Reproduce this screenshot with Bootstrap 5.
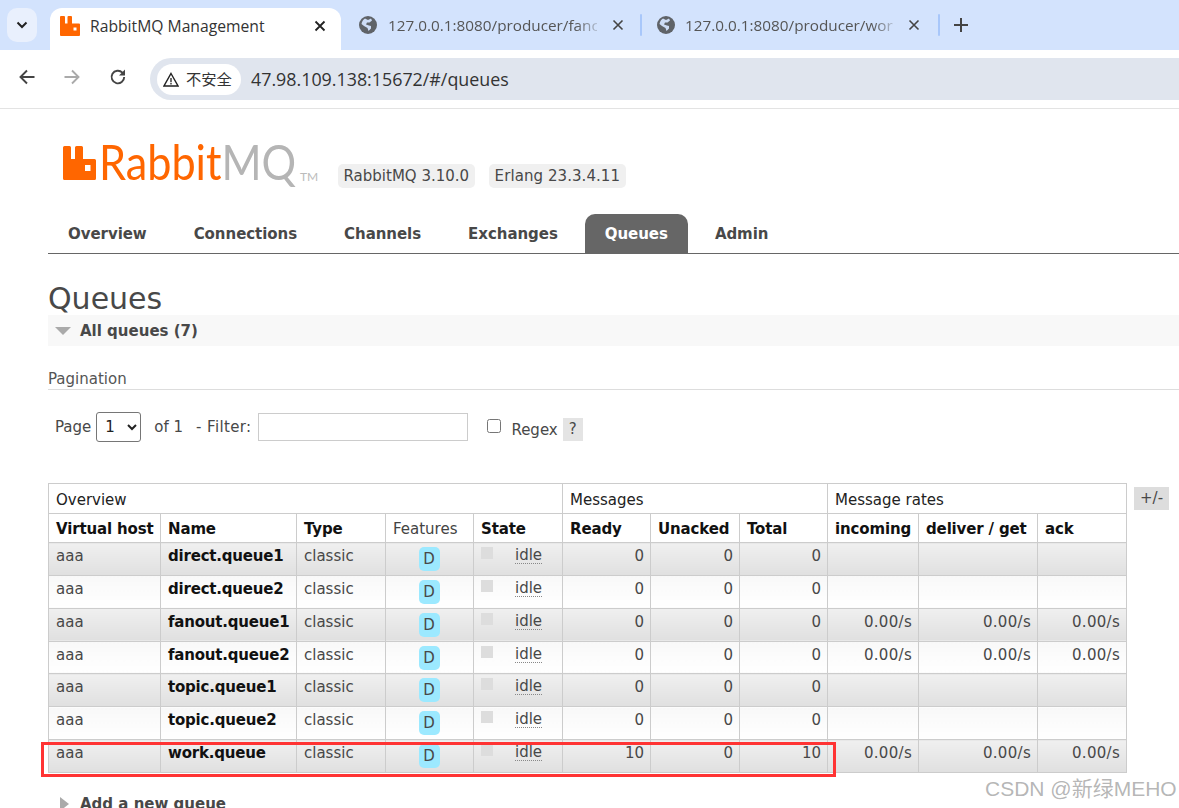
<!DOCTYPE html>
<html lang="en">
<head>
<meta charset="utf-8">
<title>RabbitMQ Management</title>
<link href="https://cdn.jsdelivr.net/npm/bootstrap@5.3.0/dist/css/bootstrap.min.css" rel="stylesheet">
<style>
html,body{height:808px;overflow:hidden;background:#fff}
body{position:relative;font-family:"DejaVu Sans","Noto Sans CJK SC",sans-serif;font-size:15px;color:#484848;line-height:1.2}
.chrome-ui{font-family:"Open Sans","Noto Sans CJK SC",sans-serif}
.strip{height:50px;background:#d3e3fd;padding-left:7px}
.strip>*{flex-shrink:0}
.tab-search{width:30px;height:34px;margin-top:8px;border-radius:10px;background:#e9f0fd}
.tab-on{width:291px;height:42px;margin-top:8px;margin-left:13px;background:#fff;border-radius:12px 12px 0 0;padding:0 0 6px 10px;font-size:15.7px;color:#333}
.tab-on .ttl{width:224px;margin-left:10px;white-space:nowrap}
.tab-off{width:302px;height:34px;margin-top:8px;font-size:15.3px;color:#555;padding-left:18px}
.tab-off>*{flex-shrink:0}
.tab-off .ttl{width:209px;margin-left:11px;white-space:nowrap;-webkit-mask-image:linear-gradient(90deg,#000 90%,rgba(0,0,0,.25))}
.tab-off .xx{margin-left:15px}
.tab-two{width:330px;padding-left:14px}
.tab-two .ttl{width:208px;margin-left:10px}
.sep{width:2px;height:22px;background:#a8c7fa;border-radius:1px;margin-left:16px}
.tab-two .sep{margin-left:18px}
.plus-ic{margin-left:14px}
.tools{height:59px;border-bottom:1px solid #e3e3e3;background:#fff;padding-top:8px}
.tool-btn{width:45px;text-align:center}
.tool-btn.rl{width:46px;padding-left:1px}
.omni{height:42px;flex:1;margin-left:10px;background:#e0e5ee;border-radius:21px 0 0 21px;padding-left:7px;font-size:17.85px;color:#333}
.chip{width:84px;height:31px;background:#fff;border-radius:16px;font-size:15.3px;color:#333;padding-left:6px;gap:7px}
.url{margin-left:10px;padding-top:1px}
.brand{height:105px;padding:37px 0 0 63px}
.logo-word{font-family:Lato,"Open Sans",sans-serif;font-weight:400;font-size:48px;line-height:32px;color:#f60;margin-left:3px;transform:scaleX(.9);transform-origin:0 50%;width:200px;height:34px}
.logo-word i{font-style:normal;color:#b5b5b5}
.tm{font-size:12px;color:#bbb;margin-left:1px;margin-top:24px;width:38px;font-family:Lato,sans-serif}
.ver{background:#f0f0f0;border-radius:5px;padding:3px 5.5px;margin-top:18px;height:24px;font-size:15px;color:#484848;line-height:18px;margin-right:14px}
.ver+.ver{padding:3px 6px;letter-spacing:.07px}
.mainnav{margin-left:48px;height:40px;border-bottom:1px solid #666;gap:7px}
.mainnav .nav-link{font-weight:700;color:#484848;font-size:15px;padding:11px 20px 0;height:40px;line-height:18px;letter-spacing:-.05px}
.mainnav .nav-link.on{background:#666;color:#fff;border-radius:10px 10px 0 0}
.page-main{margin-left:48px}
.ttl-q{font-size:30px;font-weight:400;color:#484848;line-height:36px;margin:27px 0 0}
.sect{height:31px;background:#f8f8f8;margin-top:-2px;padding-left:7px;font-weight:700;gap:9px;font-size:15px}
.tri-d{width:0;height:0;border-left:8px solid transparent;border-right:8px solid transparent;border-top:8px solid #aaa}
.pg-head{font-size:15px;line-height:17px;border-bottom:1px solid #ddd;margin-top:25px;color:#555;height:19px}
.pg-form{height:30px;margin-top:22px;padding-left:7px;font-size:15px}
.pg-select{width:45px;height:30px;font-size:15px;border:1px solid #767676;border-radius:3px;background:#fff;color:#222;margin-left:5px;padding-left:4px;flex-shrink:0}
.pg-filter{letter-spacing:.35px;margin-left:13px}
.pg-of{margin-left:13px}
.pg-input{width:210px;height:28px;border:1px solid #ccc;margin-left:7px}
.pg-check{width:14px;height:14px;margin:-2px 0 0 19px;border:1px solid #767676;border-radius:2.5px;background:#fff}
.pg-regex{margin:5px 0 0 10px}
.hlp{background:#e4e4e4;padding:3px 6px;font-size:15px;margin:5px 0 0 5px;line-height:17px}
.tbl-wrap{margin-top:41px}
table.qtab{width:1078px;table-layout:fixed;border-collapse:collapse;margin:0;font-size:15px;color:#484848}
table.qtab th,table.qtab td{border:1px solid #ccc;padding:3px 6px 3px 7px;vertical-align:top;background:none;color:inherit;box-shadow:none;line-height:18px;font-size:15px;white-space:nowrap}
table.qtab thead th{font-weight:400;color:#222;height:29.5px;padding-top:6px;font-size:15px}
table.qtab thead tr:first-child th{padding-top:7px}
table.qtab thead tr+tr th{font-weight:700;color:#111;font-size:15px;letter-spacing:-.15px}
table.qtab thead tr+tr th.thin{font-weight:400;color:#444;font-size:15px;letter-spacing:0}
table.qtab tbody td{height:32.85px;padding-top:4px}
table.qtab tbody tr:nth-child(odd) td{background:linear-gradient(#f0f0f0,#e0e0e0)}
table.qtab tbody tr:nth-child(even) td{background:linear-gradient(#f8f8f8,#fff)}
table.qtab td.nm{font-weight:700;color:#111;letter-spacing:-.2px}
table.qtab td.num{text-align:right}
table.qtab td.rate{letter-spacing:.3px}
.c1{width:112px}.c2{width:136px}.c3{width:89px}.c4{width:88px}.c5{width:89px}.c6{width:88px}.c7{width:89px}.c8{width:88px}.c9{width:91px}.c10{width:119px}.c11{width:89px}
.ftr{background:#9ce9ff;border-radius:5px;width:21px;height:24px;font-size:15px;line-height:24px;text-align:center;margin:0 auto;color:#484848;position:relative;left:-1px}
.state{gap:22px}
.stbox{width:12px;height:12px;background:#ddd;margin-top:0}
.idle{border-bottom:1px dotted #888;line-height:16px;height:17px}
.plus{width:35px;height:23px;background:#ddd;margin:4px 0 0 7px;text-align:center;line-height:23px;font-size:15px;color:#484848}
.add-row{margin:22px 0 0 12px;font-weight:700;gap:11px}
.tri-r{width:0;height:0;border-top:7px solid transparent;border-bottom:7px solid transparent;border-left:9px solid #aaa}
.red-box{position:absolute;left:41px;top:742px;width:795px;height:35px;border:3px solid #f33}
.wm{position:absolute;left:985px;top:776px;font-family:"Liberation Sans","Noto Sans CJK SC",sans-serif;font-size:21px;line-height:25px;color:rgba(120,120,120,.55);white-space:nowrap}
</style>
</head>
<body>
<div class="strip d-flex chrome-ui">
  <div class="tab-search d-flex align-items-center justify-content-center">
    <svg width="12" height="8" viewBox="0 0 12 8"><path d="M1.500 1.500 6 6l4.500-4.500" fill="none" stroke="#222" stroke-width="2"/></svg>
  </div>
  <div class="tab-on d-flex align-items-center">
    <svg width="20" height="20" viewBox="0 0 20 20"><path fill="#f60" fill-rule="evenodd" d="M1 0h3a1 1 0 0 1 1 1v6.500h2.500V1a1 1 0 0 1 1-1H11a1 1 0 0 1 1 1v6.500h7a1 1 0 0 1 1 1V19a1 1 0 0 1-1 1H1a1 1 0 0 1-1-1V1a1 1 0 0 1 1-1Zm12.500 11.500v3h3v-3Z"/></svg>
    <span class="ttl">RabbitMQ Management</span>
    <svg width="12" height="12" viewBox="0 0 12 12"><path d="M1.500 1.500l9 9m0-9l-9 9" stroke="#222" stroke-width="1.800"/></svg>
  </div>
  <div class="tab-off d-flex align-items-center">
    <svg width="18" height="18" viewBox="0 0 18 18"><circle cx="9" cy="9" r="9" fill="#5f6368"/><path fill="#d3e3fd" d="M6 2.500 9 4l3-1.500 1 2-2.500 2H8L7 8.500l3 1 2 .5v2.500L9.500 15 8.500 12 5 10 2.500 8C3 5.500 4 3.500 6 2.500Z" opacity=".95"/></svg>
    <span class="ttl">127.0.0.1:8080/producer/fanc</span>
    <svg class="xx" width="12" height="12" viewBox="0 0 12 12"><path d="M1.500 1.500l9 9m0-9l-9 9" stroke="#444" stroke-width="1.600"/></svg>
    <span class="sep"></span>
  </div>
  <div class="tab-off tab-two d-flex align-items-center">
    <svg width="18" height="18" viewBox="0 0 18 18"><circle cx="9" cy="9" r="9" fill="#5f6368"/><path fill="#d3e3fd" d="M6 2.500 9 4l3-1.500 1 2-2.500 2H8L7 8.500l3 1 2 .5v2.500L9.500 15 8.500 12 5 10 2.500 8C3 5.500 4 3.500 6 2.500Z" opacity=".95"/></svg>
    <span class="ttl">127.0.0.1:8080/producer/wor</span>
    <svg class="xx" width="12" height="12" viewBox="0 0 12 12"><path d="M1.500 1.500l9 9m0-9l-9 9" stroke="#444" stroke-width="1.600"/></svg>
    <span class="sep"></span>
    <svg class="plus-ic" width="14" height="14" viewBox="0 0 14 14"><path d="M7 0v14M0 7h14" stroke="#444" stroke-width="2"/></svg>
  </div>
</div>
<div class="tools d-flex chrome-ui">
  <div class="tool-btn ms-1 pt-2"><svg width="18" height="18" viewBox="0 0 18 18"><path d="M16.500 9H2.500M9 2.500 2.500 9 9 15.500" fill="none" stroke="#444" stroke-width="1.900"/></svg></div>
  <div class="tool-btn pt-2"><svg width="18" height="18" viewBox="0 0 18 18"><path d="M1.500 9h14M9 2.500 15.500 9 9 15.500" fill="none" stroke="#aaa" stroke-width="1.900"/></svg></div>
  <div class="tool-btn rl pt-2"><svg width="18" height="18" viewBox="0 0 18 18"><path d="M15.200 9a6.300 6.300 0 1 1-1.800-4.400L15.500 6.500" fill="none" stroke="#444" stroke-width="1.900"/><path d="M16 1.500V7.500H10Z" fill="#444"/></svg></div>
  <div class="omni d-flex align-items-center">
    <div class="chip d-flex align-items-center">
      <svg width="16" height="15" viewBox="0 0 16 15"><path d="M8 1.500 15 14H1Z" fill="none" stroke="#222" stroke-width="1.400"/><path d="M8 6v4.300M8 11v1.400" stroke="#222" stroke-width="1.300"/></svg>
      <span>不安全</span>
    </div>
    <span class="url">47.98.109.138:15672/#/queues</span>
  </div>
</div>

<div class="brand d-flex">
  <svg width="33" height="34" viewBox="0 0 33 34"><path fill="#f60" fill-rule="evenodd" d="M1.500 0h5A1.500 1.500 0 0 1 8 1.500V13h4V1.500A1.500 1.500 0 0 1 13.500 0h5A1.500 1.500 0 0 1 20 1.500V13h11.500A1.500 1.500 0 0 1 33 14.500v18a1.500 1.500 0 0 1-1.500 1.500h-30A1.500 1.500 0 0 1 0 32.500v-31A1.500 1.500 0 0 1 1.500 0ZM22 19v6h5.500v-6Z"/></svg>
  <div class="logo-word">Rabbit<i>MQ</i></div>
  <div class="tm">TM</div>
  <div class="ver">RabbitMQ 3.10.0</div>
  <div class="ver">Erlang 23.3.4.11</div>
</div>

<nav class="nav mainnav">
  <a class="nav-link" href="#">Overview</a>
  <a class="nav-link" href="#">Connections</a>
  <a class="nav-link" href="#">Channels</a>
  <a class="nav-link" href="#">Exchanges</a>
  <a class="nav-link on" href="#">Queues</a>
  <a class="nav-link" href="#">Admin</a>
</nav>

<main class="page-main">
  <h1 class="ttl-q">Queues</h1>
  <div class="sect d-flex align-items-center"><span class="tri-d"></span><span>All queues (7)</span></div>
  <div class="pg-head">Pagination</div>
  <div class="pg-form d-flex align-items-center">
    <span>Page</span>
    <select class="pg-select"><option>1</option></select>
    <span class="pg-of">of 1</span>
    <span class="pg-filter">- Filter:</span>
    <input class="pg-input" type="text">
    <input class="pg-check" type="checkbox">
    <span class="pg-regex">Regex</span>
    <span class="hlp">?</span>
  </div>
  <div class="tbl-wrap d-flex align-items-start">
    <table class="table qtab">
      <colgroup><col class="c1"><col class="c2"><col class="c3"><col class="c4"><col class="c5"><col class="c6"><col class="c7"><col class="c8"><col class="c9"><col class="c10"><col class="c11"></colgroup>
      <thead>
        <tr><th colspan="5">Overview</th><th colspan="3">Messages</th><th colspan="3">Message rates</th></tr>
        <tr><th>Virtual host</th><th>Name</th><th>Type</th><th class="thin">Features</th><th>State</th><th>Ready</th><th>Unacked</th><th>Total</th><th>incoming</th><th>deliver / get</th><th>ack</th></tr>
      </thead>
      <tbody id="rows"></tbody>
    </table>
    <div class="plus">+/-</div>
  </div>
  <div class="add-row d-flex align-items-center"><span class="tri-r"></span><span>Add a new queue</span></div>
</main>

<div class="red-box"></div>
<div class="wm">CSDN @新绿MEHO</div>

<script>
var q=[["direct.queue1",0,0],["direct.queue2",0,0],["fanout.queue1",0,1],["fanout.queue2",0,1],["topic.queue1",0,0],["topic.queue2",0,0],["work.queue",10,1]];
document.getElementById("rows").innerHTML=q.map(function(r){
 var rate=r[2]?"0.00/s":"";
 return '<tr><td>aaa</td><td class="nm">'+r[0]+'</td><td>classic</td><td><div class="ftr">D</div></td><td><div class="state d-flex"><span class="stbox"></span><span class="idle">idle</span></div></td><td class="num">'+r[1]+'</td><td class="num">0</td><td class="num">'+r[1]+'</td><td class="num rate">'+rate+'</td><td class="num rate">'+rate+'</td><td class="num rate">'+rate+'</td></tr>';
}).join("");
</script>
<script src="https://cdn.jsdelivr.net/npm/bootstrap@5.3.0/dist/js/bootstrap.bundle.min.js"></script>
</body>
</html>
